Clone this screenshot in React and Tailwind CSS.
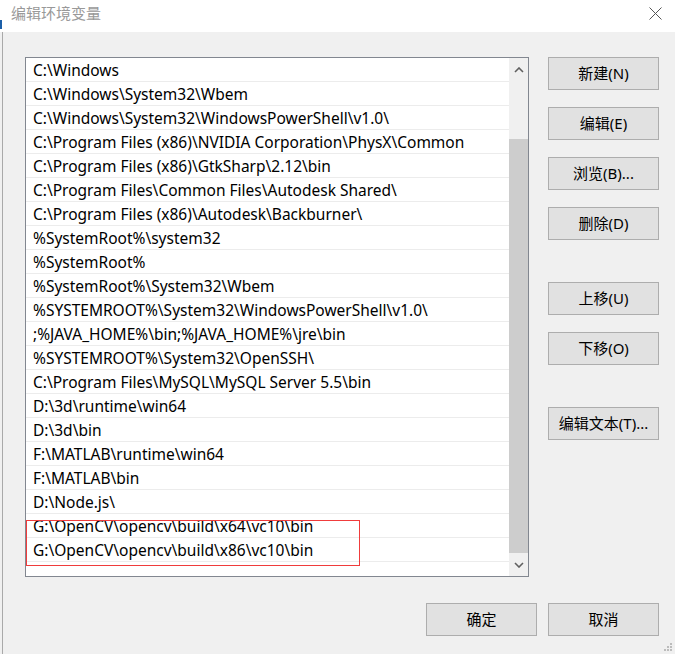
import React from "react";

const paths = [
  "C:\\Windows",
  "C:\\Windows\\System32\\Wbem",
  "C:\\Windows\\System32\\WindowsPowerShell\\v1.0\\",
  "C:\\Program Files (x86)\\NVIDIA Corporation\\PhysX\\Common",
  "C:\\Program Files (x86)\\GtkSharp\\2.12\\bin",
  "C:\\Program Files\\Common Files\\Autodesk Shared\\",
  "C:\\Program Files (x86)\\Autodesk\\Backburner\\",
  "%SystemRoot%\\system32",
  "%SystemRoot%",
  "%SystemRoot%\\System32\\Wbem",
  "%SYSTEMROOT%\\System32\\WindowsPowerShell\\v1.0\\",
  ";%JAVA_HOME%\\bin;%JAVA_HOME%\\jre\\bin",
  "%SYSTEMROOT%\\System32\\OpenSSH\\",
  "C:\\Program Files\\MySQL\\MySQL Server 5.5\\bin",
  "D:\\3d\\runtime\\win64",
  "D:\\3d\\bin",
  "F:\\MATLAB\\runtime\\win64",
  "F:\\MATLAB\\bin",
  "D:\\Node.js\\",
  "G:\\OpenCV\\opencv\\build\\x64\\vc10\\bin",
  "G:\\OpenCV\\opencv\\build\\x86\\vc10\\bin",
];

const font = "font-['Noto_Sans','Noto_Sans_CJK_SC',sans-serif]";

function Btn({ children, className = "" }) {
  return (
    <button
      className={`w-[111px] h-[33px] bg-[#e1e1e1] border border-[#adadad] text-[15px] text-black leading-none ${className}`}
    >
      {children}
    </button>
  );
}

function Chevron({ down }) {
  return (
    <svg width="10" height="6" viewBox="0 0 10 6">
      <path
        d={down ? "M1 1 L5 5 L9 1" : "M1 5 L5 1 L9 5"}
        fill="none"
        stroke="#606060"
        strokeWidth="1.6"
      />
    </svg>
  );
}

export default function App() {
  return (
    <div className={`w-[675px] h-[654px] bg-[#f0f0f0] flex flex-col ${font}`}>
      {/* Title bar */}
      <div className="relative h-[32px] bg-white flex items-center justify-between pl-[11px] pr-[13px] pb-[5px] shrink-0">
        <div className="absolute left-0 top-[20px] w-[2px] h-[9px] bg-[#1c5fa8]" />
        <span className="text-[15px] text-[#999999]">编辑环境变量</span>
        <svg width="13" height="13" viewBox="0 0 13 13">
          <path d="M0.5 0.5 L12.5 12.5 M12.5 0.5 L0.5 12.5" stroke="#555" strokeWidth="1" />
        </svg>
      </div>

      {/* Body */}
      <div className="flex-1 ml-[2px] border-l border-[#a9a9a9] relative flex flex-col pl-[22px] pt-[25px]">
        <div className="flex">
          {/* List box */}
          <div className="w-[504px] h-[520px] bg-white border border-[#828790] flex">
            <div className="flex-1 relative">
              {paths.map((p) => (
                <div
                  key={p}
                  className="h-[24px] border-b border-[#ececec] pl-[7px] pt-[2px] flex items-center text-[15.5px] text-black whitespace-nowrap"
                >
                  {p}
                </div>
              ))}
              <div className="absolute left-0 top-[462px] w-[334px] h-[46px] border border-[#f03c3c]" />
            </div>
            <div className="w-[19px] bg-[#f0f0f0] flex flex-col">
              <div className="h-[22px] flex items-center justify-center pt-[1px]">
                <Chevron />
              </div>
              <div className="h-[59px]" />
              <div className="h-[414px] bg-[#cdcdcd]" />
              <div className="flex-1 flex items-center justify-center">
                <Chevron down />
              </div>
            </div>
          </div>

          {/* Right buttons */}
          <div className="ml-[19px] flex flex-col">
            <Btn>新建(N)</Btn>
            <Btn className="mt-[17px]">编辑(E)</Btn>
            <Btn className="mt-[17px]">浏览(B)...</Btn>
            <Btn className="mt-[17px]">删除(D)</Btn>
            <Btn className="mt-[42px]">上移(U)</Btn>
            <Btn className="mt-[17px]">下移(O)</Btn>
            <Btn className="mt-[42px]">编辑文本(T)...</Btn>
          </div>
        </div>

        {/* Bottom buttons */}
        <div className="flex justify-end gap-[11px] pr-[16px] mt-[26px]">
          <Btn className="h-[32px]">确定</Btn>
          <Btn className="h-[32px]">取消</Btn>
        </div>

        {/* Resize grip */}
        <svg className="absolute right-[2px] bottom-[2px]" width="9" height="9" viewBox="0 0 9 9">
          <rect x="6" y="0" width="2" height="2" fill="#bcbcbc" />
          <rect x="3" y="3" width="2" height="2" fill="#bcbcbc" />
          <rect x="6" y="3" width="2" height="2" fill="#bcbcbc" />
          <rect x="0" y="6" width="2" height="2" fill="#bcbcbc" />
          <rect x="3" y="6" width="2" height="2" fill="#bcbcbc" />
          <rect x="6" y="6" width="2" height="2" fill="#bcbcbc" />
        </svg>
      </div>
    </div>
  );
}
